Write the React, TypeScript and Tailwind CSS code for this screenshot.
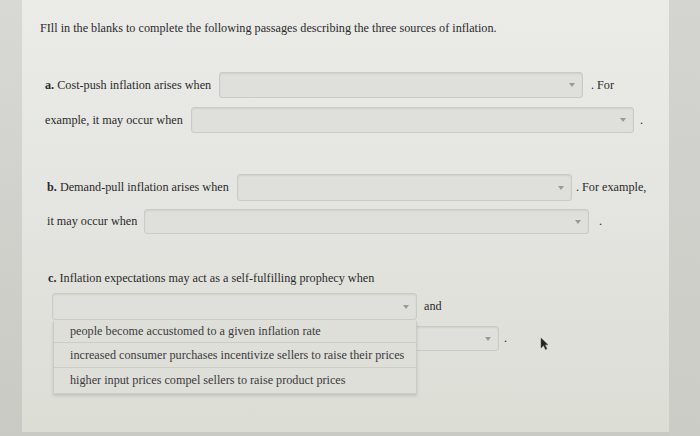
import React from "react";

function Caret() {
  return (
    <svg width="6" height="4" viewBox="0 0 6 4" className="shrink-0">
      <path d="M0 0 L6 0 L3 4 Z" fill="#9a9a98" />
    </svg>
  );
}

function Select({ w, h }: { w: string; h: string }) {
  return (
    <div
      className={`${w} ${h} shrink-0 flex items-center justify-end pr-[7px] rounded-[3px] border border-[#cacac6] bg-[#dfdfdb] shadow-[inset_0_1px_2px_rgba(0,0,0,0.07)]`}
    >
      <Caret />
    </div>
  );
}

export default function App() {
  return (
    <div className="relative flex h-[436px] w-[700px] overflow-hidden bg-[#d0d1cb] font-['Liberation_Serif',serif] text-[12.2px] text-[#2b2b2b]">
      <div className="w-[22px] shrink-0 bg-gradient-to-b from-[#d8d8d5] to-[#c9cac3]" />
      <div className="flex w-[647px] shrink-0 flex-col">
        <div className="relative h-[432px] bg-gradient-to-b from-[#ebebe8] via-[#e4e4e0] to-[#dcddd5]">
          <div className="flex h-[56px] items-center pl-[18px]">
            FIll in the blanks to complete the following passages describing the three sources of inflation.
          </div>

          <div className="mt-[16px] flex h-[26px] items-center pl-[23px]">
            <span className="w-[174px] shrink-0 whitespace-nowrap">
              <b>a.</b> Cost-push inflation arises when
            </span>
            <Select w="w-[364px]" h="h-[26px]" />
            <span className="ml-[8px]">. For</span>
          </div>

          <div className="mt-[9px] flex h-[26px] items-center pl-[23px]">
            <span className="w-[146px] shrink-0 whitespace-nowrap">example, it may occur when</span>
            <Select w="w-[443px]" h="h-[26px]" />
            <span className="ml-[6px]">.</span>
          </div>

          <div className="mt-[41px] flex h-[27px] items-center pl-[25px]">
            <span className="w-[190px] shrink-0 whitespace-nowrap">
              <b>b.</b> Demand-pull inflation arises when
            </span>
            <Select w="w-[335px]" h="h-[27px]" />
            <span className="ml-[4px]">. For example,</span>
          </div>

          <div className="mt-[8px] flex h-[25px] items-center pl-[25px]">
            <span className="w-[97px] shrink-0 whitespace-nowrap">it may occur when</span>
            <Select w="w-[445px]" h="h-[25px]" />
            <span className="ml-[10px]">.</span>
          </div>

          <div className="mt-[36px] flex h-[16px] items-center pl-[26px]">
            <span>
              <b>c.</b> Inflation expectations may act as a self-fulfilling prophecy when
            </span>
          </div>

          <div className="relative">
            <div className="mt-[7px] flex h-[27px] items-center pl-[30px]">
              <Select w="w-[365px]" h="h-[27px]" />
              <span className="ml-[7px]">and</span>
            </div>
            <div className="mt-[6px] flex h-[25px] items-center pl-[31px]">
              <Select w="w-[446px]" h="h-[25px]" />
              <span className="ml-[5px]">.</span>
            </div>

            <div className="absolute left-[31px] top-[28px] w-[364px] border border-t-0 border-[#cbcbc6] bg-[#dfdfda] text-[#3a3a3a] shadow-[0_2px_3px_rgba(0,0,0,0.12)]">
              <div className="flex h-[22px] items-center border-b border-[#cdcdc8] pl-[16px]">
                people become accustomed to a given inflation rate
              </div>
              <div className="flex h-[25px] items-center border-b border-[#cdcdc8] pl-[16px]">
                increased consumer purchases incentivize sellers to raise their prices
              </div>
              <div className="flex h-[25px] items-center pl-[16px]">
                higher input prices compel sellers to raise product prices
              </div>
            </div>
          </div>

          <svg className="absolute left-[518px] top-[337px]" width="9" height="13" viewBox="0 0 9 13">
            <path d="M1 1 L1 11 L3.5 8.5 L5.5 12.5 L7 11.8 L5 7.8 L8 7.8 Z" fill="#222" stroke="#555" strokeWidth="0.5" />
          </svg>
        </div>
        <div className="h-[4px] bg-[#c9cac3]" />
      </div>
      <div className="flex-1 bg-gradient-to-b from-[#d4d4d0] to-[#caccc5]" />
    </div>
  );
}
